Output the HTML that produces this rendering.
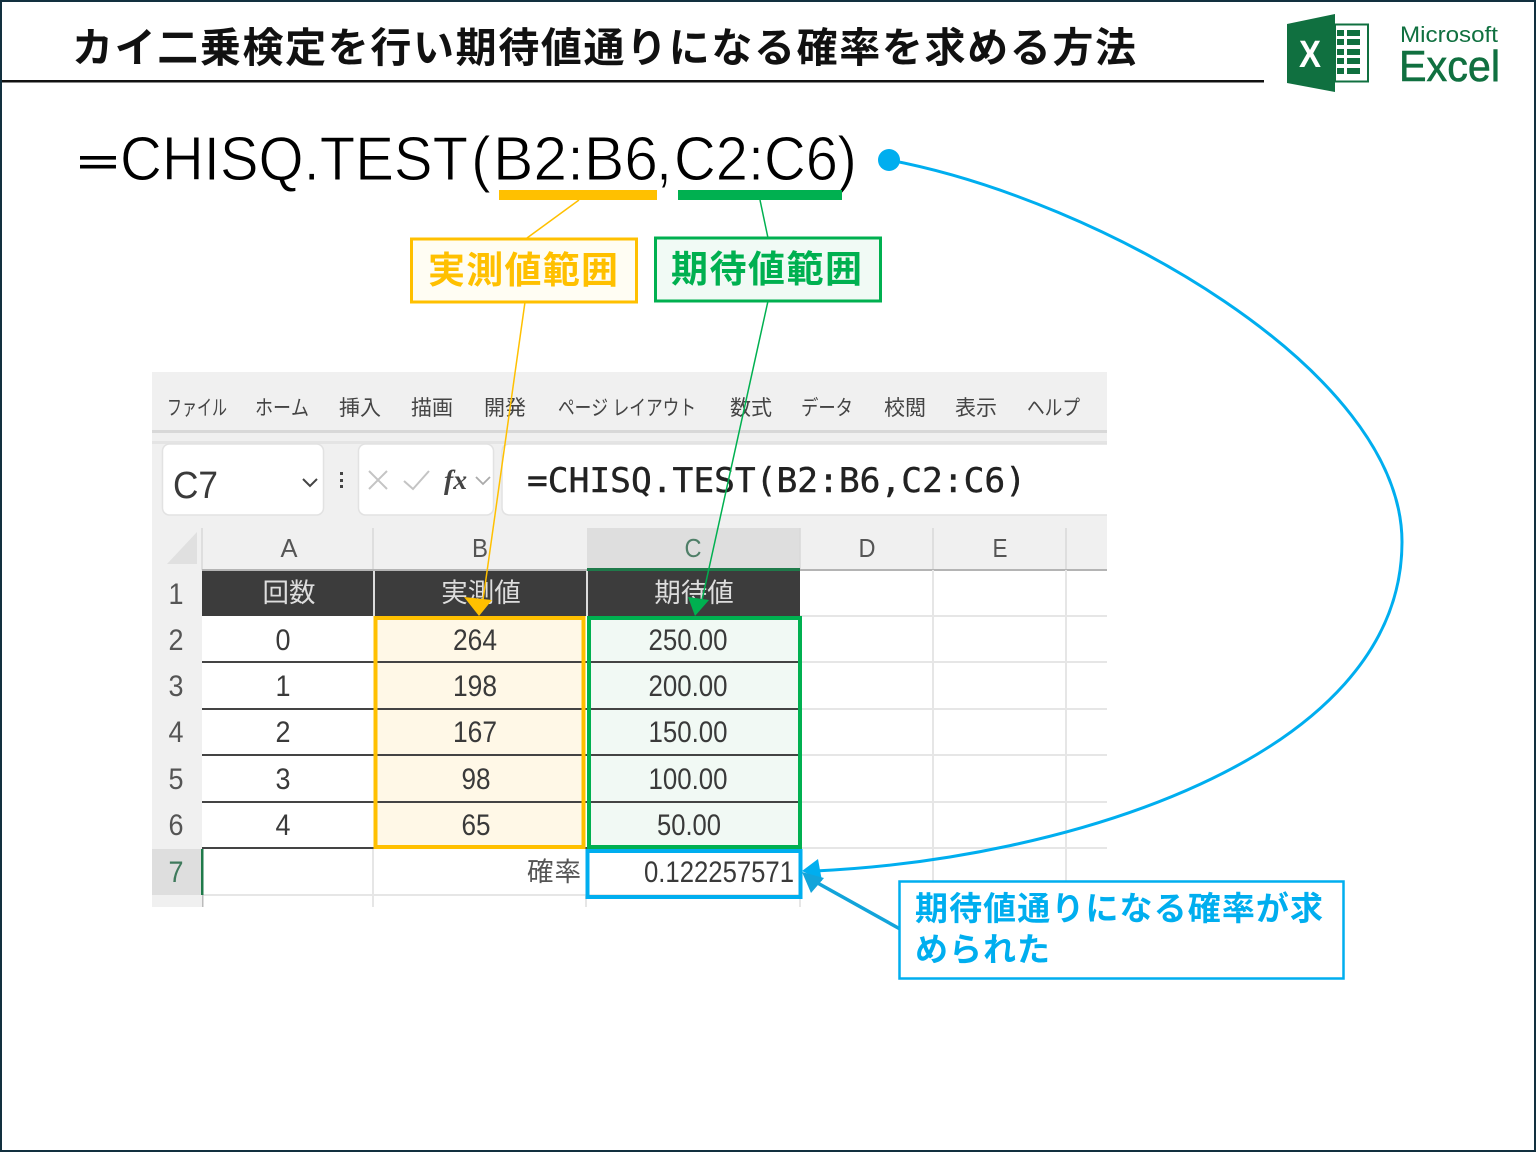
<!DOCTYPE html>
<html lang="ja"><head><meta charset="utf-8"><title>CHISQ.TEST</title>
<style>
html,body{margin:0;padding:0;background:#fff}
svg{display:block}
text{font-family:"Liberation Sans","Noto Sans CJK JP",sans-serif;font-kerning:none}
.m{font-family:"DejaVu Sans Mono","Liberation Mono",monospace}
.h{font-size:26px;fill:#555;text-anchor:middle}
.n{font-size:30px;fill:#555;text-anchor:middle}
.d{font-size:30px;fill:#3a3a3a;text-anchor:middle}
.w{font-size:26.500px;fill:#ddd;text-anchor:middle}
.f{font-size:62px;fill:#000;stroke:#fff;stroke-width:1}
</style></head><body>
<svg width="1536" height="1152" viewBox="0 0 1536 1152" xmlns="http://www.w3.org/2000/svg">
<rect width="1536" height="1152" fill="#fff"/>
<text x="72" y="62" font-size="41" font-weight="700" fill="#111" textLength="1064" lengthAdjust="spacing">カイ二乗検定を行い期待値通りになる確率を求める方法</text>
<rect x="0" y="80" width="1264" height="2.500" fill="#111"/>

<!-- Excel logo -->
<path d="M1287 24 L1335 14 V92 L1287 83 Z" fill="#107040"/>
<text x="1310" y="67" font-size="38" font-weight="700" fill="#fff" text-anchor="middle" textLength="22" lengthAdjust="spacingAndGlyphs">X</text>
<rect x="1335" y="24.500" width="33" height="57" fill="none" stroke="#107040" stroke-width="2"/>
<g fill="#107040">
<rect x="1337" y="30" width="7" height="6"/><rect x="1347" y="30" width="13" height="6"/>
<rect x="1337" y="39" width="7" height="6"/><rect x="1347" y="39" width="13" height="6"/>
<rect x="1337" y="49" width="7" height="6"/><rect x="1347" y="49" width="13" height="6"/>
<rect x="1337" y="58" width="7" height="6"/><rect x="1347" y="58" width="13" height="6"/>
<rect x="1337" y="68" width="7" height="6"/><rect x="1347" y="68" width="13" height="6"/>
</g>
<text x="1400" y="42" font-size="22" fill="#107040" textLength="98" lengthAdjust="spacingAndGlyphs">Microsoft</text>
<text x="1399" y="81" font-size="44" fill="#107040" stroke="#107040" stroke-width=".6" textLength="101" lengthAdjust="spacingAndGlyphs">Excel</text>

<!-- Formula -->
<text transform="translate(74 177) scale(.75 .6)" style="font-size:64px;fill:#000;stroke:#000;stroke-width:1.500">＝</text>
<text class="f" x="120" y="180" textLength="348" lengthAdjust="spacingAndGlyphs">CHISQ.TEST</text>
<text class="f" x="471" y="180" textLength="20" lengthAdjust="spacingAndGlyphs">(</text>
<text class="f" x="493" y="180" textLength="165" lengthAdjust="spacingAndGlyphs">B2:B6</text>
<text class="f" x="656" y="180" textLength="16" lengthAdjust="spacingAndGlyphs">,</text>
<text class="f" x="674" y="180" textLength="164" lengthAdjust="spacingAndGlyphs">C2:C6</text>
<text class="f" x="837" y="180" textLength="20" lengthAdjust="spacingAndGlyphs">)</text>
<rect x="499" y="190" width="158" height="10" fill="#FFC000"/>
<rect x="678" y="190" width="164" height="10" fill="#00B050"/>
<line x1="579" y1="200" x2="527" y2="238" stroke="#FFC000" stroke-width="1.500"/>
<line x1="760" y1="200" x2="768" y2="238" stroke="#00B050" stroke-width="1.500"/>
<rect x="411.500" y="239" width="225" height="63" fill="#FFFDF3" stroke="#FFC000" stroke-width="3"/>
<rect x="655.500" y="238" width="225" height="63" fill="#F1FAF5" stroke="#00B050" stroke-width="3"/>
<text x="428" y="283" font-size="37" font-weight="700" fill="#FFC000" textLength="190" lengthAdjust="spacing">実測値範囲</text>
<text x="671" y="282" font-size="37" font-weight="700" fill="#00B050" textLength="191" lengthAdjust="spacing">期待値範囲</text>

<!-- Excel sheet -->
<rect x="152" y="372" width="955" height="535" fill="#fff"/>
<rect x="152" y="372" width="955" height="158" fill="#f0f0f0"/>
<rect x="152" y="430" width="955" height="3" fill="#d8d8d8"/>
<rect x="152" y="441" width="955" height="3" fill="#e4e4e4"/>
<g font-size="21" fill="#444">
<text x="167" y="415" textLength="60" lengthAdjust="spacingAndGlyphs">ファイル</text>
<text x="255" y="415" textLength="54" lengthAdjust="spacingAndGlyphs">ホーム</text>
<text x="339" y="415" textLength="42" lengthAdjust="spacing">挿入</text>
<text x="411" y="415" textLength="42" lengthAdjust="spacing">描画</text>
<text x="484" y="415" textLength="42" lengthAdjust="spacing">開発</text>
<text x="558" y="415" textLength="138" lengthAdjust="spacingAndGlyphs">ページ レイアウト</text>
<text x="730" y="415" textLength="42" lengthAdjust="spacing">数式</text>
<text x="801" y="415" textLength="52" lengthAdjust="spacingAndGlyphs">データ</text>
<text x="884" y="415" textLength="42" lengthAdjust="spacing">校閲</text>
<text x="955" y="415" textLength="42" lengthAdjust="spacing">表示</text>
<text x="1027" y="415" textLength="53" lengthAdjust="spacingAndGlyphs">ヘルプ</text>
</g>
<rect x="162.500" y="444" width="161" height="71" rx="7" fill="#fff" stroke="#e2e2e2" stroke-width="1.500"/>
<text x="173" y="498" font-size="38" fill="#3a3a3a" textLength="45" lengthAdjust="spacingAndGlyphs">C7</text>
<path d="M303 479 L310 486 L317 479" fill="none" stroke="#444" stroke-width="2"/>
<g fill="#444"><rect x="340" y="472" width="3" height="3"/><rect x="340" y="479" width="3" height="3"/><rect x="340" y="485" width="3" height="3"/></g>
<rect x="358.500" y="444" width="135" height="71" rx="7" fill="#fff" stroke="#e2e2e2" stroke-width="1.500"/>
<path d="M369 471 L387 489 M387 471 L369 489" stroke="#c4c4c4" stroke-width="2" fill="none"/>
<path d="M404 481 L413 489 L429 471" stroke="#c4c4c4" stroke-width="2" fill="none"/>
<text x="444" y="489" font-size="27" font-style="italic" font-weight="700" fill="#444" style="font-family:'Liberation Serif',serif" textLength="23" lengthAdjust="spacingAndGlyphs">fx</text>
<path d="M476 477 L483 484 L490 477" fill="none" stroke="#aaa" stroke-width="1.800"/>
<path d="M1107 444 H510 Q502 444 502 452 V507 Q502 515 510 515 H1107" fill="#fff" stroke="#e2e2e2" stroke-width="1.500"/>
<text class="m" x="527" y="492" font-size="34" fill="#222" stroke="#222" stroke-width=".4" textLength="499" lengthAdjust="spacingAndGlyphs">=CHISQ.TEST(B2:B6,C2:C6)</text>

<!-- Headers -->
<rect x="152" y="528" width="955" height="42" fill="#f0f0f0"/>
<rect x="152" y="570" width="50" height="337" fill="#f0f0f0"/>
<rect x="587" y="528" width="213" height="42" fill="#dedede"/>
<rect x="152" y="849" width="50" height="46" fill="#dedede"/>
<path d="M197 532 V564 H167 Z" fill="#e0e0e0"/>
<g stroke="#d8d8d8" stroke-width="1.500">
<line x1="373" y1="528" x2="373" y2="570"/><line x1="933" y1="528" x2="933" y2="570"/><line x1="1066" y1="528" x2="1066" y2="570"/><line x1="800" y1="528" x2="800" y2="570"/><line x1="202" y1="528" x2="202" y2="570"/>
</g>
<rect x="202" y="569" width="905" height="2" fill="#b4b4b4"/>
<rect x="587" y="568" width="213" height="3" fill="#1f7a4a"/>
<text class="h" x="289" y="557" textLength="17" lengthAdjust="spacingAndGlyphs">A</text><text class="h" x="480" y="557" textLength="16" lengthAdjust="spacingAndGlyphs">B</text><text class="h" x="693" y="557" style="fill:#4f7f68" textLength="17" lengthAdjust="spacingAndGlyphs">C</text><text class="h" x="867" y="557" textLength="17" lengthAdjust="spacingAndGlyphs">D</text><text class="h" x="1000" y="557" textLength="15" lengthAdjust="spacingAndGlyphs">E</text>
<text class="n" x="176" y="604" textLength="15" lengthAdjust="spacingAndGlyphs">1</text><text class="n" x="176" y="650" textLength="15" lengthAdjust="spacingAndGlyphs">2</text><text class="n" x="176" y="696" textLength="15" lengthAdjust="spacingAndGlyphs">3</text><text class="n" x="176" y="742" textLength="15" lengthAdjust="spacingAndGlyphs">4</text><text class="n" x="176" y="789" textLength="15" lengthAdjust="spacingAndGlyphs">5</text><text class="n" x="176" y="835" textLength="15" lengthAdjust="spacingAndGlyphs">6</text><text class="n" x="176" y="882" style="fill:#3f7a5c" textLength="15" lengthAdjust="spacingAndGlyphs">7</text>

<!-- grid -->
<g stroke="#e6e6e6" stroke-width="2">
<line x1="800" y1="616" x2="1107" y2="616"/><line x1="800" y1="662" x2="1107" y2="662"/><line x1="800" y1="709" x2="1107" y2="709"/><line x1="800" y1="755" x2="1107" y2="755"/><line x1="800" y1="802" x2="1107" y2="802"/><line x1="800" y1="848" x2="1107" y2="848"/>
<line x1="202" y1="895" x2="800" y2="895"/>
<line x1="933" y1="570" x2="933" y2="907"/><line x1="1066" y1="570" x2="1066" y2="907"/>
<line x1="373" y1="849" x2="373" y2="907"/><line x1="586" y1="895" x2="586" y2="907"/><line x1="800" y1="895" x2="800" y2="907"/>
</g>
<rect x="202" y="571" width="598" height="45" fill="#3c3c3c"/>
<rect x="373" y="571" width="2" height="45" fill="#ddd"/><rect x="586" y="571" width="2" height="45" fill="#ddd"/>
<rect x="376" y="618" width="209" height="229" fill="#FFF8E7"/>
<rect x="589" y="618" width="210" height="229" fill="#F1F9F4"/>
<g fill="#444">
<rect x="202" y="661" width="598" height="2"/><rect x="202" y="708" width="598" height="2"/><rect x="202" y="754" width="598" height="2"/><rect x="202" y="801" width="598" height="2"/><rect x="202" y="847" width="385" height="2"/>
</g>
<rect x="201" y="849" width="2.500" height="46" fill="#1f7a4a"/>
<rect x="202" y="895" width="1.500" height="12" fill="#bbb"/>
<text class="w" x="289" y="602">回数</text><text class="w" x="481" y="602">実測値</text><text class="w" x="694" y="602">期待値</text>
<text class="d" x="283" y="650" textLength="15" lengthAdjust="spacingAndGlyphs">0</text><text class="d" x="283" y="696" textLength="15" lengthAdjust="spacingAndGlyphs">1</text><text class="d" x="283" y="742" textLength="15" lengthAdjust="spacingAndGlyphs">2</text><text class="d" x="283" y="789" textLength="15" lengthAdjust="spacingAndGlyphs">3</text><text class="d" x="283" y="835" textLength="15" lengthAdjust="spacingAndGlyphs">4</text>
<text class="d" x="475" y="650" textLength="44" lengthAdjust="spacingAndGlyphs">264</text><text class="d" x="475" y="696" textLength="44" lengthAdjust="spacingAndGlyphs">198</text><text class="d" x="475" y="742" textLength="44" lengthAdjust="spacingAndGlyphs">167</text><text class="d" x="476" y="789" textLength="29" lengthAdjust="spacingAndGlyphs">98</text><text class="d" x="476" y="835" textLength="29" lengthAdjust="spacingAndGlyphs">65</text>
<text class="d" x="688" y="650" textLength="79" lengthAdjust="spacingAndGlyphs">250.00</text><text class="d" x="688" y="696" textLength="79" lengthAdjust="spacingAndGlyphs">200.00</text><text class="d" x="688" y="742" textLength="79" lengthAdjust="spacingAndGlyphs">150.00</text><text class="d" x="688" y="789" textLength="79" lengthAdjust="spacingAndGlyphs">100.00</text><text class="d" x="689" y="835" textLength="64" lengthAdjust="spacingAndGlyphs">50.00</text>
<text x="527" y="881" font-size="26.500" fill="#555" textLength="54" lengthAdjust="spacing">確率</text>
<text x="644" y="882" font-size="30" fill="#3a3a3a" textLength="150" lengthAdjust="spacingAndGlyphs">0.122257571</text>

<rect x="375.500" y="618" width="208" height="229" fill="none" stroke="#FFC000" stroke-width="4"/>
<rect x="589" y="618" width="211" height="229" fill="none" stroke="#00B050" stroke-width="4"/>
<rect x="587.500" y="851" width="213" height="46" fill="none" stroke="#00AEEF" stroke-width="4"/>

<!-- connectors -->
<line x1="525" y1="302" x2="483" y2="600" stroke="#FFC000" stroke-width="1.500"/>
<path d="M464 597 L492 600 L479 616 Z" fill="#FFC000"/>
<line x1="768" y1="301" x2="702" y2="600" stroke="#00B050" stroke-width="1.500"/>
<path d="M688 597 L709 600 L695 616 Z" fill="#00B050"/>
<circle cx="889" cy="160" r="11" fill="#00AEEF"/>
<path d="M889 160 C1100 200 1402 370 1402 542 C1402 760 1060 860 815 871" fill="none" stroke="#00AEEF" stroke-width="3"/>
<path d="M802 871 L818 859 L822 881 Z" fill="#00AEEF"/>
<line x1="900" y1="929" x2="814" y2="881" stroke="#12A4DA" stroke-width="3.500"/>
<path d="M802 872 L824 878 L811 893 Z" fill="#12A4DA"/>

<rect x="899.500" y="881.500" width="444" height="97" fill="#fff" stroke="#00AEEF" stroke-width="2.500"/>
<text x="915" y="920" font-size="33" font-weight="700" fill="#00AEEF" textLength="408" lengthAdjust="spacing">期待値通りになる確率が求</text>
<text x="915" y="961" font-size="33" font-weight="700" fill="#00AEEF" textLength="135" lengthAdjust="spacing">められた</text>

<!-- page border -->
<rect x="1" y="1" width="1534" height="1150" fill="none" stroke="#12303f" stroke-width="2"/>
</svg>
</body></html>
